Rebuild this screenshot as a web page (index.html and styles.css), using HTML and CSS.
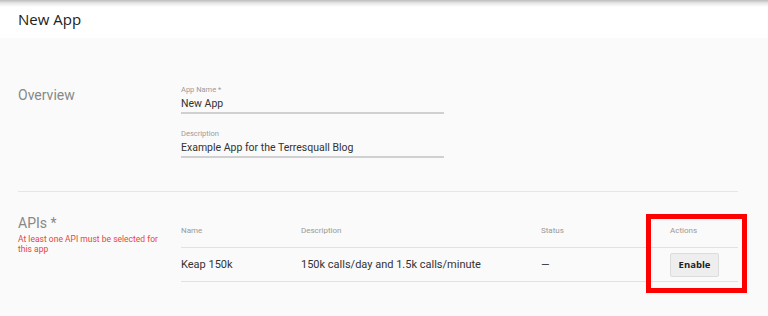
FILE: index.html
```html
<!DOCTYPE html>
<html>
<head>
<meta charset="utf-8">
<link rel="stylesheet" href="styles.css">
</head>
<body>
<header class="topbar">New App</header>
<main class="main">
  <section class="section overview">
    <div class="side">
      <div class="side-title">Overview</div>
    </div>
    <div class="fields">
      <div class="field">
        <div class="field-label">App Name *</div>
        <div class="field-value">New App</div>
      </div>
      <div class="field">
        <div class="field-label">Description</div>
        <div class="field-value">Example App for the Terresquall Blog</div>
      </div>
    </div>
  </section>
  <section class="section apis">
    <div class="side">
      <div class="side-title">APIs *</div>
      <div class="side-error">At least one API must be selected for this app</div>
    </div>
    <div class="table-wrap">
      <div class="table">
        <div class="th">Name</div>
        <div class="th">Description</div>
        <div class="th">Status</div>
        <div class="th">Actions</div>
        <div class="td">Keap 150k</div>
        <div class="td">150k calls/day and 1.5k calls/minute</div>
        <div class="td">—</div>
        <div class="td"><button class="btn">Enable</button></div>
      </div>
      <div class="highlight"></div>
    </div>
  </section>
</main>
</body>
</html>
```
FILE: styles.css
```css
html, body {
  margin: 0;
  padding: 0;
}
body {
  background: #fafafa;
  font-family: Roboto, "Liberation Sans", sans-serif;
  width: 768px;
  height: 316px;
  overflow: hidden;
}
.topbar {
  height: 38px;
  box-sizing: border-box;
  background: linear-gradient(#bcbcbc 0, #e6e6e6 3px, #ffffff 7px, #ffffff 100%);
  display: flex;
  align-items: center;
  padding: 0 0 0 18px;
  font-family: "Open Sans", "Noto Sans", sans-serif;
  font-size: 15px;
  color: #222;
}
.main {
  padding: 0 30px 0 18px;
}
.section {
  display: flex;
}
.overview {
  padding: 46px 0 33px;
  border-bottom: 1px solid #e6e6e6;
}
.side {
  width: 163px;
  flex: none;
}
.side-title {
  font-size: 14px;
  line-height: 17px;
  color: #888;
}
.overview .side-title {
  margin-top: 3px;
}
.fields {
  display: flex;
  flex-direction: column;
  gap: 14px;
}
.field {
  width: 263px;
  border-bottom: 2px solid #d0d0d0;
}
.field-label {
  font-size: 7.5px;
  line-height: 12px;
  color: #9a9a9a;
}
.field-value {
  font-size: 10.5px;
  line-height: 16px;
  color: #333;
}
.apis {
  padding-top: 22px;
}
.apis .side-title {
  margin-top: 1px;
}
.side-error {
  margin-top: 2px;
  font-size: 8.5px;
  line-height: 10px;
  color: #e8453f;
  width: 150px;
}
.table-wrap {
  position: relative;
  flex: 1;
}
.table {
  display: grid;
  grid-template-columns: 120px 240px 129px 1fr;
}
.th {
  font-size: 8px;
  line-height: 10px;
  padding: 12px 0 11px;
  color: #999;
  border-bottom: 1px solid #e2e2e2;
}
.td {
  height: 33px;
  display: flex;
  align-items: center;
  font-size: 11px;
  color: #333;
  border-bottom: 1px solid #e2e2e2;
}
.btn {
  width: 49px;
  height: 24px;
  box-sizing: border-box;
  background: #eeeeee;
  border: 1px solid #dcdcdc;
  border-radius: 2px;
  font-family: "Open Sans", "Noto Sans", sans-serif;
  font-weight: 700;
  font-size: 9.5px;
  color: #222;
  padding: 0;
}
.highlight {
  position: absolute;
  left: 465px;
  top: 0;
  width: 101px;
  height: 79px;
  box-sizing: border-box;
  border: 5px solid #ff0000;
}
```
